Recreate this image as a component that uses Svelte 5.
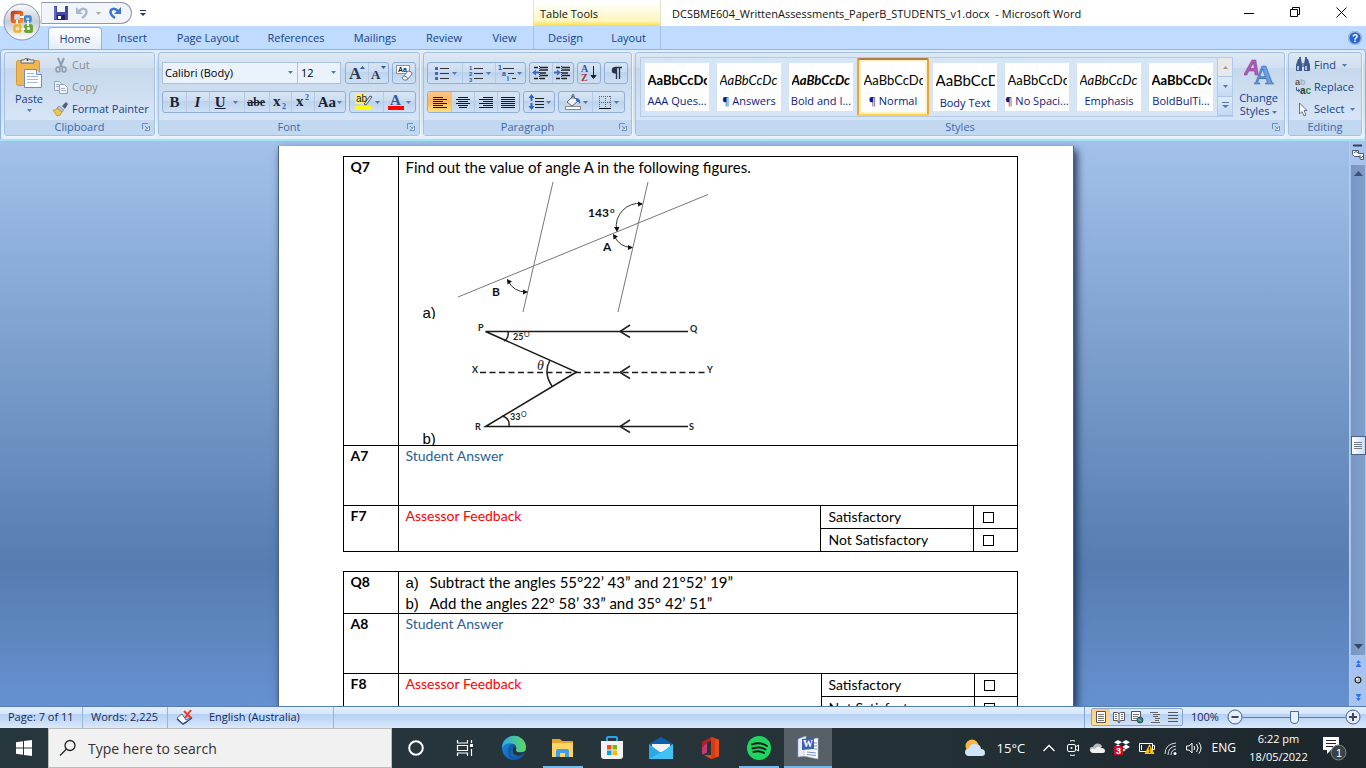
<script>
  const tabs = ['Home', 'Insert', 'Page Layout', 'References', 'Mailings', 'Review', 'View'];
  const toolTabs = ['Design', 'Layout'];

  const fontEdit = [
    { id: 'grow', label: 'Grow font', w: 22 },
    { id: 'shrink', label: 'Shrink font', w: 21 }
  ];
  const fontStyle = [
    { id: 'bold', label: 'Bold', w: 23 },
    { id: 'italic', label: 'Italic', w: 23 },
    { id: 'underline', label: 'Underline', w: 35, arrow: true },
    { id: 'strike', label: 'Strikethrough', w: 25 },
    { id: 'sub', label: 'Subscript', w: 23 },
    { id: 'sup', label: 'Superscript', w: 23 },
    { id: 'case', label: 'Change case', w: 31, arrow: true }
  ];
  const fontColor = [
    { id: 'highlight', label: 'Highlight', w: 33, arrow: true },
    { id: 'color', label: 'Font color', w: 32, arrow: true }
  ];
  const lists = [
    { id: 'bullets', label: 'Bullets', w: 34, arrow: true },
    { id: 'numbers', label: 'Numbering', w: 33, arrow: true },
    { id: 'multi', label: 'Multilevel list', w: 30, arrow: true }
  ];
  const indents = [
    { id: 'outdent', label: 'Decrease indent', w: 22 },
    { id: 'indent', label: 'Increase indent', w: 21 }
  ];
  const aligns = [
    { id: 'left', label: 'Align left', w: 23, on: true },
    { id: 'center', label: 'Center', w: 23 },
    { id: 'right', label: 'Align right', w: 23 },
    { id: 'justify', label: 'Justify', w: 22 }
  ];
  const fills = [
    { id: 'shade', label: 'Shading', w: 33, arrow: true },
    { id: 'borders', label: 'Borders', w: 32, arrow: true }
  ];

  const styles = [
    { name: 'AAA Ques...', look: 'b' },
    { name: '¶ Answers', look: 'i' },
    { name: 'Bold and I...', look: 'b i' },
    { name: '¶ Normal', look: '', on: true },
    { name: 'Body Text', look: 'body' },
    { name: '¶ No Spaci...', look: '' },
    { name: 'Emphasis', look: 'i' },
    { name: 'BoldBulTi...', look: 'b' }
  ];

  const verdicts = ['Satisfactory', 'Not Satisfactory'];
  const apps = [
    { id: 'cortana', label: 'Cortana' },
    { id: 'taskview', label: 'Task View' },
    { id: 'edge', label: 'Edge' },
    { id: 'explorer', label: 'File Explorer', open: true },
    { id: 'store', label: 'Store' },
    { id: 'mail', label: 'Mail' },
    { id: 'office', label: 'Office' },
    { id: 'spotify', label: 'Spotify', open: true },
    { id: 'word', label: 'Word', open: true, on: true }
  ];
  const views = ['print', 'read', 'web', 'outline', 'draft'];
  let zoom = $state(50);
</script>

{#snippet arrow()}
  <svg class="arrow" width="5" height="3" viewBox="0 0 5 3" aria-hidden="true"><path d="M0 0h5L2.500 3z" fill="#5579ad" /></svg>
{/snippet}

{#snippet launcher()}
  <svg class="launcher" width="8" height="8" viewBox="0 0 8 8" aria-hidden="true">
    <path d="M0.500 6V.5H6" fill="none" stroke="#6a8fc0" />
    <path d="M3 3l3 3M7.500 3v4.500H3z" fill="#fff" stroke="#6a8fc0" />
  </svg>
{/snippet}

{#snippet glyph(id)}
  {#if id === 'grow' || id === 'shrink'}
    <svg width="18" height="18" viewBox="0 0 18 18">
      <text x={id === 'grow' ? 1 : 2} y="15" class="serif b" font-size={id === 'grow' ? 17 : 13} fill="#2a3850">A</text>
      <path d={id === 'grow' ? 'M12 5h5l-2.500-3z' : 'M12 2h5l-2.500 3z'} fill="#2c5aa5" />
    </svg>
  {:else if id === 'clear'}
    <svg width="18" height="18" viewBox="0 0 18 18">
      <rect x="1.500" y="1.500" width="13" height="8" fill="#fff" stroke="#7f93b4" />
      <text x="3" y="8" font-size="7" class="sans b" fill="#223">Aa</text>
      <path d="M7 14l6-7q4 0 4 3l-5 6q-4 1-5-2z" fill="#f4f7fc" stroke="#66799c" />
      <path d="M9 12q3 0 4 3" fill="none" stroke="#66799c" />
    </svg>
  {:else if id === 'bold'}<b class="char">B</b>
  {:else if id === 'italic'}<i class="char">I</i>
  {:else if id === 'underline'}<u class="char">U</u>
  {:else if id === 'strike'}<s class="char small">abe</s>
  {:else if id === 'sub' || id === 'sup'}
    <svg width="16" height="16" viewBox="0 0 16 16">
      <text x="1" y="12" font-size="15" class="serif b" fill="#202530">x</text>
      <text x="10" y={id === 'sub' ? 15 : 6} font-size="8" class="serif b" fill="#2d60bd">2</text>
    </svg>
  {:else if id === 'case'}<span class="char">Aa</span>
  {:else if id === 'highlight'}
    <svg width="20" height="18" viewBox="0 0 20 18">
      <rect x="1" y="1" width="11" height="10" fill="#fff06a" />
      <path d="M10 11l6-8 2 1-6 8z" fill="#dfe5ee" stroke="#4e5a70" />
      <text x="2" y="9" font-size="10" class="sans" fill="#202020">ab</text>
      <rect x="1" y="13" width="16" height="4" fill="#ff0" />
    </svg>
  {:else if id === 'color'}
    <svg width="18" height="18" viewBox="0 0 18 18">
      <text x="3" y="12" font-size="15" class="serif b" fill="#33569c">A</text>
      <rect x="1" y="13" width="16" height="4" fill="#f00" />
    </svg>
  {:else if id === 'bullets'}
    <svg width="18" height="18" viewBox="0 0 18 18">
      <path d="M7 4.500h9M7 9.500h9M7 14.500h9" stroke="#333" />
      <path d="M2 3h3v3H2zM2 8h3v3H2zM2 13h3v3H2z" fill="#3f6ab3" />
    </svg>
  {:else if id === 'numbers'}
    <svg width="18" height="18" viewBox="0 0 18 18">
      <path d="M7 4.500h9M7 9.500h9M7 14.500h9" stroke="#333" />
      <g class="sans b" font-size="6" fill="#2d56a3"><text x="2" y="6">1</text><text x="2" y="12">2</text><text x="2" y="18">3</text></g>
    </svg>
  {:else if id === 'multi'}
    <svg width="18" height="18" viewBox="0 0 18 18">
      <path d="M5 4.500h11M10 9.500h6M14 14.500h4" stroke="#333" />
      <g class="sans b" font-size="7" fill="#2d56a3"><text x="0" y="6">1</text><text x="4" y="12">a</text><text x="9" y="17">i</text></g>
    </svg>
  {:else if id === 'outdent' || id === 'indent'}
    <svg width="18" height="18" viewBox="0 0 18 18">
      <path d="M2 3.500h4M8 3.500h8M8 6h8M8 9h6M8 11.500h8M2 14.500h4M8 14.500h5" stroke="#222" stroke-width="1.500" />
      <path d="M7.500 2v14" stroke="#222" stroke-dasharray="1 1" />
      <path d={id === 'outdent' ? 'M0 8.500l4-3v2h3v2H4v2z' : 'M7 8.500l-4-3v2H0v2h3v2z'} fill="#3b6cc4" />
    </svg>
  {:else if id === 'sort'}
    <svg width="18" height="18" viewBox="0 0 18 18">
      <text x="1" y="8" font-size="10" class="serif b" fill="#2d56a3">A</text>
      <text x="1" y="17" font-size="10" class="serif b" fill="#a3303a">Z</text>
      <path d="M13.500 2v12M11 11.500l2.500 3 2.500-3z" stroke="#222" fill="#222" />
    </svg>
  {:else if id === 'pilcrow'}
    <svg width="18" height="18" viewBox="0 0 18 18">
      <path d="M8 3.500h7M9.500 3v12M12.500 3v12" stroke="#26324a" stroke-width="1.300" />
      <path d="M9.500 3v6.500H8A3.200 3.200 0 018 3z" fill="#26324a" />
    </svg>
  {:else if id === 'left' || id === 'center' || id === 'right' || id === 'justify'}
    <svg width="16" height="14" viewBox="0 0 16 14">
      <path
        d={id === 'left'
          ? 'M1 2.500h10M1 4.500h14M1 6.500h10M1 8.500h14M1 10.500h10M1 12.500h14'
          : id === 'center'
            ? 'M3 2.500h10M1 4.500h14M3 6.500h10M1 8.500h14M3 10.500h10M4 12.500h8'
            : id === 'right'
              ? 'M5 2.500h10M1 4.500h14M5 6.500h10M1 8.500h14M5 10.500h10M1 12.500h14'
              : 'M1 2.500h14M1 4.500h14M1 6.500h14M1 8.500h14M1 10.500h14M1 12.500h14'}
        stroke="#15181d"
      />
    </svg>
  {:else if id === 'spacing'}
    <svg width="18" height="18" viewBox="0 0 18 18">
      <path d="M8 5.500h9M8 8.500h9M8 11.500h9M8 14.500h9" stroke="#222" />
      <path d="M4.500 1l3 4h-2v3h-2V5h-2zM4.500 17l3-4h-2v-3h-2v3h-2z" fill="#2e62c2" />
    </svg>
  {:else if id === 'shade'}
    <svg width="18" height="18" viewBox="0 0 18 18">
      <path d="M3 9l6-6 5 5-6 5z" fill="#f4f6fa" stroke="#55627a" />
      <path d="M8 6V2q2-2 2 1v3" fill="none" stroke="#55627a" />
      <path d="M12 5q5 0 4 6-2-3-4-3z" fill="#3767b5" />
      <rect x="1.500" y="13.500" width="15" height="3" fill="#fff" stroke="#888" />
    </svg>
  {:else if id === 'borders'}
    <svg width="16" height="16" viewBox="0 0 16 16">
      <path d="M2 2.500h12M2 8.500h12M2.500 2v12M8.500 2v12M13.500 2v12" stroke="#56627a" stroke-dasharray="1 1" />
      <path d="M2 14.500h12" stroke="#111" />
    </svg>
  {/if}
{/snippet}

{#snippet bar(items)}
  <div class="bar">
    {#each items as t}
      <button class:on={t.on} style="width:{t.w}px" aria-label={t.label}>
        {@render glyph(t.id)}
        {#if t.arrow}{@render arrow()}{/if}
      </button>
    {/each}
  </div>
{/snippet}

{#snippet feedback(n)}
  <tr class="rate">
    <th rowspan="2">F{n}</th>
    <td rowspan="2" class="red">Assessor Feedback</td>
    <td><label for="s{n}0">{verdicts[0]}</label></td>
    <td><input type="checkbox" id="s{n}0" /></td>
  </tr>
  <tr class="rate">
    <td><label for="s{n}1">{verdicts[1]}</label></td>
    <td><input type="checkbox" id="s{n}1" /></td>
  </tr>
{/snippet}

<div class="window">
  <header class="title">
    <div class="quick">
      <button class="orb" aria-label="Office Button">
        <svg width="38" height="38" viewBox="0 0 38 38">
          <defs>
            <linearGradient id="orb" x2="0" y2="1"><stop offset="0" stop-color="#fafbfd" /><stop offset=".5" stop-color="#c5cddb" /><stop offset="1" stop-color="#fff" /></linearGradient>
            <linearGradient id="orbr" x2="1" y2="1"><stop offset="0" stop-color="#c93a12" /><stop offset="1" stop-color="#f58a2c" /></linearGradient>
          </defs>
          <circle cx="19" cy="19" r="18" fill="url(#orb)" stroke="#8593ad" />
          <g fill="none" stroke-linejoin="round">
            <rect x="9.500" y="9.500" width="9" height="9" rx="1" stroke="url(#orbr)" stroke-width="3.500" />
            <rect x="22" y="13.500" width="5.500" height="5" rx="1" stroke="#3a86d4" stroke-width="2.500" />
            <rect x="11.500" y="22.500" width="6" height="6" rx="1" stroke="#f2b321" stroke-width="2.500" />
            <rect x="22.500" y="22.500" width="6" height="6" rx="1" stroke="#6ba531" stroke-width="3" />
          </g>
          <g fill="#f3f6fb"><path d="M13 17h2v4h-2zM17 13h4v2h-4zM24 18h2v5h-2zM18 25h4v2h-4z" /></g>
        </svg>
      </button>
      <div class="qat">
        <button aria-label="Save">
          <svg width="14" height="14" viewBox="0 0 14 14"><path d="M0 0h14v14H0z" fill="#4747a5" /><path d="M3 0h8v6H3z" fill="#f3f5fb" /><path d="M3 9h8v5H3z" fill="#24245c" /><path d="M4 10h3v3H4z" fill="#fff" /><path d="M1 1v12" stroke="#8888d8" /></svg>
        </button>
        <button aria-label="Undo">
          <svg width="14" height="14" viewBox="0 0 14 14"><path d="M4 5q4-4 7-1 2 4-4 8" fill="none" stroke="#a9b8d0" stroke-width="2.500" /><path d="M1 1v7h7z" fill="#a9b8d0" /></svg>
        </button>
        <span class="dim">{@render arrow()}</span>
        <button aria-label="Redo">
          <svg width="14" height="14" viewBox="0 0 14 14"><path d="M10 5Q6 1 3 4q-2 4 4 8" fill="none" stroke="#3c76c8" stroke-width="2.500" /><path d="M13 1v7H6z" fill="#3c76c8" /></svg>
        </button>
      </div>
      <svg class="more" width="6" height="7" viewBox="0 0 6 7" aria-hidden="true"><path d="M0 .5h6" stroke="#234" /><path d="M0 3h6L3 6z" fill="#1c3c72" /></svg>
    </div>
    <div class="context">Table Tools</div>
    <h1>DCSBME604_WrittenAssessments_PaperB_STUDENTS_v1.docx&nbsp; - Microsoft Word</h1>
    <div class="controls">
      <button aria-label="Minimize"><svg width="11" height="11" viewBox="0 0 11 11"><path d="M0 6.500h10" stroke="#000" /></svg></button>
      <button aria-label="Restore"><svg width="11" height="11" viewBox="0 0 11 11"><path d="M.5 2.500h7v7h-7zM2.500 2V.5h7v7H8" fill="none" stroke="#000" /></svg></button>
      <button aria-label="Close"><svg width="11" height="11" viewBox="0 0 11 11"><path d="M.5 .5l10 10M10.500 .5l-10 10" stroke="#000" /></svg></button>
    </div>
  </header>

  <nav class="tabs">
    {#each tabs as t, i}<button class:active={i === 0}>{t}</button>{/each}
    <div class="tooltabs">{#each toolTabs as t}<button>{t}</button>{/each}</div>
    <button class="help" aria-label="Help">
      <svg width="14" height="14" viewBox="0 0 14 14"><circle cx="7" cy="7" r="6.300" fill="#2864ce" stroke="#dfe9f8" /><circle cx="7" cy="7" r="6.800" fill="none" stroke="#5a84bd" stroke-width=".5" /><text x="4" y="10.500" font-size="10" class="sans b" fill="#fff">?</text></svg>
    </button>
  </nav>

  <div class="ribbon">
    <section class="group clip">
      <div class="body">
        <button class="big paste">
          <svg width="28" height="32" viewBox="0 0 28 32">
            <rect x="1.500" y="3.500" width="23" height="25" rx="2" fill="#efb653" stroke="#d19a3c" />
            <path d="M6 6V3h3q1-3 7 0h3v3z" fill="#ececec" stroke="#666" />
            <circle cx="12.500" cy="3" r="1" fill="#333" />
            <path d="M9.500 12.500h12l5 5v13h-17z" fill="#fff" stroke="#6d8ec4" />
            <path d="M21.500 12.500v5h5" fill="#dce8fa" stroke="#6d8ec4" />
            <path d="M12 16.500h7M12 19.500h11M12 22.500h11M12 25.500h11" stroke="#9fb7de" />
          </svg>
          <span>Paste</span>
          {@render arrow()}
        </button>
        <div class="stack">
          <button class="off">
            <svg width="16" height="16" viewBox="0 0 16 16"><path d="M5 1l4 9M11 1L7 10" stroke="#8f9cb0" stroke-width="2" /><g fill="none" stroke="#8f9cb0" stroke-width="1.500"><ellipse cx="5" cy="12.500" rx="2" ry="2.500" /><ellipse cx="11" cy="12.500" rx="2" ry="2.500" /></g></svg>Cut
          </button>
          <button class="off">
            <svg width="16" height="16" viewBox="0 0 16 16"><path d="M1.500 2.500h5l2 2v7h-7z" fill="#e9eff8" stroke="#95a5bf" /><path d="M6.500 5.500h5l3 3v6h-8z" fill="#f0f4fa" stroke="#95a5bf" /><path d="M3 5.500h3M3 7.500h3M8 9.500h4M8 11.500h5" stroke="#a7b5cb" /></svg>Copy
          </button>
          <button>
            <svg width="16" height="16" viewBox="0 0 16 16"><path d="M9 5l4-4 2 2-3 5z" fill="#4f5d85" /><path d="M6 5l5 4-2 2-5-4z" fill="#bcc7dc" stroke="#66708c" stroke-width=".6" /><path d="M4 7l5 4q-1 4-5 4L0 9q3 1 4-2z" fill="#f0c64c" stroke="#a97e22" stroke-width=".6" /></svg>Format Painter
          </button>
        </div>
      </div>
      <h2>Clipboard{@render launcher()}</h2>
    </section>

    <section class="group font">
      <div class="body rows">
        <div class="row">
          <div class="combos">
            <label class="combo wide"><select aria-label="Font"><option>Calibri (Body)</option></select>{@render arrow()}</label>
            <label class="combo"><select aria-label="Font size"><option>12</option></select>{@render arrow()}</label>
          </div>
          {@render bar(fontEdit)}
          {@render bar([{ id: 'clear', label: 'Clear formatting', w: 22 }])}
        </div>
        <div class="row">
          {@render bar(fontStyle)}
          {@render bar(fontColor)}
        </div>
      </div>
      <h2>Font{@render launcher()}</h2>
    </section>

    <section class="group para">
      <div class="body rows">
        <div class="row">
          {@render bar(lists)}
          {@render bar(indents)}
          {@render bar([{ id: 'sort', label: 'Sort', w: 22 }])}
          {@render bar([{ id: 'pilcrow', label: 'Show marks', w: 22 }])}
        </div>
        <div class="row">
          {@render bar(aligns)}
          {@render bar([{ id: 'spacing', label: 'Line spacing', w: 30, arrow: true }])}
          {@render bar(fills)}
        </div>
      </div>
      <h2>Paragraph{@render launcher()}</h2>
    </section>

    <section class="group styles">
      <div class="body">
        <div class="gallery">
          {#each styles as s}
            <button class="style" class:on={s.on}>
              <span class="tile">
                <span class="preview {s.look}">AaBbCcDc</span>
                <span class="name">{s.name}</span>
              </span>
            </button>
          {/each}
          <div class="scroller">
            <button class="dim" aria-label="Previous row"><svg width="5" height="3" viewBox="0 0 5 3"><path d="M0 3h5L2.500 0z" fill="#9a9a9a" /></svg></button>
            <button aria-label="Next row">{@render arrow()}</button>
            <button aria-label="More styles"><svg width="7" height="7" viewBox="0 0 7 7"><path d="M0 .5h7" stroke="#5579ad" /><path d="M0 3h7L3.500 6z" fill="#5579ad" /></svg></button>
          </div>
        </div>
        <button class="big change">
          <svg width="30" height="30" viewBox="0 0 30 30">
            <text x="0" y="18" font-size="22" font-style="italic" class="sans b" fill="#b058ba" stroke="#7c3b8c" stroke-width=".5">A</text>
            <text x="10" y="27" font-size="27" class="serif b" fill="#6a9ee2" stroke="#2f62ad" stroke-width=".6">A</text>
          </svg>
          <span>Change<br />Styles {@render arrow()}</span>
        </button>
      </div>
      <h2>Styles{@render launcher()}</h2>
    </section>

    <section class="group edit">
      <div class="body">
        <div class="stack">
          <button>
            <svg width="16" height="16" viewBox="0 0 16 16"><path d="M3 2h3l1 5v7H1V8zM10 2h3l2 6v6H9V7z" fill="#3d5a8f" /><path d="M7 6h2v4H7z" fill="#6e89b8" /><path d="M3 9v4M11 9v4" stroke="#d9e5f7" stroke-width="1.500" /><path d="M4 1h2M10 1h2" stroke="#22375f" stroke-width="1.500" /></svg>Find {@render arrow()}
          </button>
          <button>
            <svg width="16" height="16" viewBox="0 0 16 16"><text x="0" y="6" font-size="9" class="sans b" fill="#555">a<tspan fill="#a4b0c0">b</tspan></text><text x="5" y="15" font-size="10" class="sans b" fill="#333">a<tspan fill="#2a8a3c">c</tspan></text><path d="M1.500 8v3.500h3M3 10l2 1.500L3 13" fill="none" stroke="#3f66a5" /></svg>Replace
          </button>
          <button>
            <svg width="16" height="16" viewBox="0 0 16 16"><path d="M4.500 2v11l2.500-2.500 2 4.500 2-1-2-4.500h3z" fill="#fff" stroke="#66718a" /></svg>Select {@render arrow()}
          </button>
        </div>
      </div>
      <h2>Editing</h2>
    </section>
  </div>

  <main class="workspace">
    <div class="canvas">
      <article class="page">
        <table>
          <colgroup><col class="c1" /><col /><col class="c3" /><col class="c4" /></colgroup>
          <tbody>
            <tr>
              <th>Q7</th>
              <td colspan="3">
                <p>Find out the value of angle A in the following figures.</p>
                <ol class="figs">
                  <li class="fa">
                    <span class="mark">a)</span>
                    <svg width="275" height="140" viewBox="440 179 275 140" role="img" aria-label="Two parallel lines cut by a transversal">
                      <g stroke="#777" fill="none"><path d="M458 297L708 194.500M553 182L523 312M648 182L618 312" /></g>
                      <g stroke="#333" fill="none"><path d="M616.500 230A23 23 0 01642 203.500M614 236Q620 247 631 247.500M508 281Q514 292 526 292" /></g>
                      <g fill="#111">
                        <path d="M643 204l-5-2.500v5zM617 232l-3-5h5.500zM613 234l.5 5.500 4.500-3zM633 247.500l-5-2.500v5zM507 279l.5 5.500 4.500-3zM528 292l-5-2.500v5z" />
                        <g class="doc b" font-size="12"><text x="588" y="217">143</text><text x="603" y="251">A</text><text x="492" y="296">B</text></g>
                        <text class="doc b" font-size="8" x="610" y="213">o</text>
                      </g>
                    </svg>
                  </li>
                  <li class="fb">
                    <span class="mark">b)</span>
                    <svg width="275" height="125" viewBox="440 320 275 125" role="img" aria-label="Three parallel lines joined by two segments">
                      <path d="M688 331.500H485.500L576.500 372 485.500 426.500H688" fill="none" stroke="#181818" stroke-width="1.500" />
                      <path d="M480 372.500h225" stroke="#181818" stroke-width="1.500" stroke-dasharray="6 3.500" />
                      <path d="M630 325l-10 6.500 10 6M630 366l-10 6.500 10 6M630 420l-10 6.500 10 6" fill="none" stroke="#222" stroke-width="1.500" />
                      <path d="M508 332q1 6-4 9M550 360q-7 13 2 26M502 416q8 2 7 10" fill="none" stroke="#222" stroke-width="1.500" />
                      <g class="doc b" font-size="9" fill="#222">
                        <text x="478" y="331">P</text><text x="690" y="332">Q</text><text x="472" y="373">X</text><text x="707" y="373">Y</text><text x="475" y="430">R</text><text x="689" y="430">S</text>
                        <text x="513" y="340">25</text><text x="510" y="420">33</text>
                      </g>
                      <g class="doc" font-size="7" fill="#222"><text x="524" y="337">O</text><text x="521" y="417">O</text></g>
                      <text x="537" y="370" class="serif" font-size="14" font-style="italic" fill="#222">θ</text>
                    </svg>
                  </li>
                </ol>
              </td>
            </tr>
            <tr class="answer"><th>A7</th><td colspan="3" class="blue">Student Answer</td></tr>
            {@render feedback(7)}
          </tbody>
        </table>
        <table>
          <colgroup><col class="c1" /><col /><col class="c3" /><col class="c4" /></colgroup>
          <tbody>
            <tr class="q8">
              <th>Q8</th>
              <td colspan="3">
                <ol class="sums">
                  <li><span class="mark">a)</span>Subtract the angles 55°22’ 43” and 21°52’ 19”</li>
                  <li><span class="mark">b)</span>Add the angles 22° 58’ 33” and 35° 42’ 51”</li>
                </ol>
              </td>
            </tr>
            <tr class="answer"><th>A8</th><td colspan="3" class="blue">Student Answer</td></tr>
            {@render feedback(8)}
          </tbody>
        </table>
      </article>
    </div>
    <aside class="scroll">
      <div class="ruler">
        <svg width="14" height="18" viewBox="0 0 14 18" aria-hidden="true"><path d="M2 .5h9v2H2z" fill="#30415f" /><path d="M1.500 6.500h6v3h5v6h-3l-1-3h-5l-2-2z" fill="#fff" stroke="#4a5877" /><path d="M3 9l2-1.500L7 9M9 11v3M10 14l2-2" fill="none" stroke="#4a5877" /></svg>
      </div>
      <div class="track">
        <svg width="9" height="5" viewBox="0 0 9 5" aria-hidden="true"><path d="M0 5h9L4.500 0z" fill="#3d5075" /></svg>
        <span style="flex-grow:58"></span>
        <div class="thumb"><svg width="8" height="8" viewBox="0 0 8 8" aria-hidden="true"><path d="M0 .5h8M0 2.500h8M0 4.500h8M0 6.500h8" stroke="#6e7b90" /></svg></div>
        <span style="flex-grow:42"></span>
        <svg width="9" height="5" viewBox="0 0 9 5" aria-hidden="true"><path d="M0 0h9L4.500 5z" fill="#35466b" /></svg>
      </div>
      <div class="browse">
        <svg width="5" height="7" viewBox="0 0 5 7" aria-hidden="true"><path d="M0 3h5L2.500 0zM0 6h5L2.500 3zM0 6h5v1H0z" fill="#2f73f0" /></svg>
        <svg width="8" height="8" viewBox="0 0 8 8" aria-hidden="true"><circle cx="4" cy="4" r="3" fill="#b9bcb6" stroke="#000" /><circle cx="3" cy="3" r="1" fill="#fff" /></svg>
        <svg width="5" height="7" viewBox="0 0 5 7" aria-hidden="true"><path d="M0 4h5L2.500 7zM0 1h5L2.500 4zM0 0h5v1H0z" fill="#2f73f0" /></svg>
      </div>
    </aside>
  </main>

  <footer class="status">
    <span class="cell page-no">Page: 7 of 11</span>
    <span class="cell words">Words: 2,225</span>
    <span class="cell lang">
      <svg width="18" height="16" viewBox="0 0 18 16" aria-hidden="true"><path d="M1 9l5-4 4 6 6-3-6 6-3 1z" fill="#fff" stroke="#4c69a5" /><path d="M1 10l6 5 9-6" fill="none" stroke="#2d4f94" stroke-width="1.500" /><path d="M8 2l7 7M15 1L9 9" stroke="#ec3f26" stroke-width="2" /></svg>
      English (Australia)
    </span>
    <div class="right">
      <div class="views">
        {#each views as v}
          <button class:on={v === 'print'} aria-label="{v} view">
            <svg width="14" height="14" viewBox="0 0 14 14">
              {#if v === 'print'}
                <path d="M2.500 1.500h9v11h-9z" fill="#fff" stroke="#555" /><path d="M4 4.500h6M4 6.500h6M4 8.500h6M4 10.500h6" stroke="#777" />
              {:else if v === 'read'}
                <path d="M1.500 2.500h4l1.500 1 1.500-1h4v8h-4L7 13l-1.500-2.500h-4zM7 3v9" fill="#fff" stroke="#555" /><path d="M3 4.500h2M3 6.500h2M3 8.500h2M9 4.500h2M9 6.500h2M9 8.500h2" stroke="#777" />
              {:else if v === 'web'}
                <path d="M1.500 1.500h9v9h-9z" fill="#fff" stroke="#555" /><path d="M3 4.500h6M3 6.500h5M3 8.500h4" stroke="#777" /><circle cx="10" cy="10" r="3" fill="#3577b7" stroke="#245a46" /><path d="M8 9l3 2" stroke="#63b25a" stroke-width="1.500" />
              {:else if v === 'outline'}
                <path d="M2 2.500h8M5 4.500h7M5 6.500h5M7 8.500h5M7 10.500h4M3 12.500h9" stroke="#666" />
              {:else}
                <path d="M2 2.500h10M2 5.500h10M2 8.500h10M2 11.500h10" stroke="#555" />
              {/if}
            </svg>
          </button>
        {/each}
      </div>
      <span class="pct">100%</span>
      <button class="round" aria-label="Zoom out"><svg width="16" height="16" viewBox="0 0 16 16"><circle cx="8" cy="8" r="7" fill="#e4edf9" stroke="#3c5d91" /><path d="M4.500 8h7" stroke="#445" stroke-width="2" /></svg></button>
      <input type="range" min="0" max="100" bind:value={zoom} aria-label="Zoom" />
      <button class="round" aria-label="Zoom in"><svg width="16" height="16" viewBox="0 0 16 16"><circle cx="8" cy="8" r="7" fill="#e4edf9" stroke="#3c5d91" /><path d="M4 8h8M8 4v8" stroke="#445" stroke-width="2" /></svg></button>
    </div>
  </footer>

  <div class="taskbar">
    <button class="start" aria-label="Start"><svg width="16" height="16" viewBox="0 0 16 16"><path d="M0 2.200L7 1.200V7.500H0zM8 1l8-1v7.500H8zM0 8.500h7v6.300l-7-1zM8 8.500h8V16l-8-1z" fill="#fff" /></svg></button>
    <label class="search">
      <svg width="18" height="18" viewBox="0 0 18 18" aria-hidden="true"><circle cx="11" cy="6.500" r="5" fill="none" stroke="#222" stroke-width="1.300" /><path d="M7.500 10L1 16.500" stroke="#222" stroke-width="1.300" /></svg>
      <input type="text" placeholder="Type here to search" aria-label="Search" />
    </label>
    <div class="apps">
      {#each apps as a}
        <button class:open={a.open} class:on={a.on} aria-label={a.label}>
          <svg width="26" height="26" viewBox="0 0 26 26">
            {#if a.id === 'cortana'}
              <circle cx="13" cy="13" r="6.800" fill="none" stroke="#fff" stroke-width="2" />
            {:else if a.id === 'taskview'}
              <path d="M5.500 5v3h10V5M5.500 21v-3h10v3M5.500 10.500h10v5h-10zM19.500 5v3M19.500 14v7" fill="none" stroke="#fff" stroke-width="1.200" /><path d="M18 9h3v3h-3z" fill="#fff" />
            {:else if a.id === 'edge'}
              <defs>
                <linearGradient id="eg" x2="1"><stop offset="0" stop-color="#2ba9e8" /><stop offset="1" stop-color="#5fd860" /></linearGradient>
                <linearGradient id="eb" x2="1" y2="1"><stop offset="0" stop-color="#1c8fe0" /><stop offset="1" stop-color="#104f9c" /></linearGradient>
              </defs>
              <circle cx="13" cy="13" r="12" fill="url(#eb)" />
              <path d="M1 13A12 12 0 0125 12.500q0 5-6 5-5 0-4-3 1-5-4-6-7-1-10 4.500z" fill="url(#eg)" />
              <path d="M8 12q1-3 4-3 4 1 3 5.500-1 3 4 3 3 0 5-1l.5.500q-1 2-3 3-3 1-6-.5-4-2-3-6-3 1-2.500 5 .5 4 4.500 6-7-1-7.500-8-.2-2.500 1-4.500z" fill="#155aa5" />
              <path d="M12.500 12.500q-3 6 3 8 4 1 8-2.500l1 .5-1.500 3.500 3-1V15l-1.500 1q-2 1.500-5.500 1.500-4.500 0-4-3 .5-2-.5-3z" fill="#26353b" />
            {:else if a.id === 'explorer'}
              <path d="M2 4h8l2 2h11v16H2z" fill="#e9a528" /><path d="M2 8h21v14H2z" fill="#fdd566" /><path d="M6 22v-6q0-2 2-2h9q2 0 2 2v6h-4v-4h-5v4z" fill="#3f9de0" />
            {:else if a.id === 'store'}
              <path d="M8 8V3q0-1 1-1h8q1 0 1 1v5" fill="none" stroke="#28a5e8" stroke-width="2" /><path d="M2 6h22v15q0 3-3 3H5q-3 0-3-3z" fill="#f3f3f3" /><path d="M8 10h4.500v4.500H8z" fill="#f25022" /><path d="M13.500 10H18v4.500h-4.500z" fill="#7fba00" /><path d="M8 15.500h4.500V20H8z" fill="#00a4ef" /><path d="M13.500 15.500H18V20h-4.500z" fill="#ffb900" />
            {:else if a.id === 'mail'}
              <path d="M1 9l12-7 12 7v15H1z" fill="#0f5fae" /><path d="M4 9h18v8H4z" fill="#f2f2f2" /><path d="M1 9l12 9L25 9v15H1z" fill="#29a8ea" /><path d="M1 24l17-9.500L25 9v15z" fill="#40c2f5" />
            {:else if a.id === 'office'}
              <path d="M5 7l9-5v4l-4 1.500v10L6 19.500l-1-1z" fill="#b3202c" /><path d="M5 13l5-5v9.500L6 19.500l-1-1z" fill="#c23a75" /><path d="M14 2l8 2.500v17L14 24l-7-4h7z" fill="#ea4a16" /><path d="M14 2l4 1.200V23l-4 1z" fill="#d83b12" />
            {:else if a.id === 'spotify'}
              <circle cx="13" cy="13" r="12" fill="#1ed760" /><path d="M6 9.500q8-3 15 1.500M6.500 13.500q7.500-2.500 13 1M7.500 17q6-2 10.500 1" fill="none" stroke="#121a17" stroke-width="2" stroke-linecap="round" />
            {:else}
              <path d="M3 4l8-3v20l-8 1z" fill="#e9eef8" stroke="#8fa4cd" stroke-width=".6" /><path d="M9 6l14-3v21l-14-3z" fill="#fff" stroke="#a3b2cf" stroke-width=".6" /><path d="M7 4l12-1v11L7 15z" fill="#3c62b5" /><text x="8" y="12" font-size="10" class="serif b" fill="#fff">W</text><path d="M19 8h3M19 11h3M19 14h3M12 17l9 1M12 19.500l9 1" stroke="#6e8cc9" />
            {/if}
          </svg>
        </button>
      {/each}
    </div>
    <div class="tray">
      <svg width="22" height="18" viewBox="0 0 22 18" aria-hidden="true"><circle cx="8" cy="7" r="6.500" fill="#f8b73c" /><path d="M5 17q-4 0-4-4 0-3 4-4 2-5 7-4 5 1 5 5 4 0 4 4 0 3-3 3z" fill="#cfe4f8" /></svg>
      <span class="temp">15°C</span>
      <svg width="14" height="8" viewBox="0 0 14 8" aria-hidden="true"><path d="M1.500 7L7 1.500 12.500 7" fill="none" stroke="#fff" stroke-width="1.300" /></svg>
      <svg width="18" height="18" viewBox="-3 0 18 18" aria-hidden="true"><path d="M4 2q2-1 5 0M4 16q2 1 5 0" fill="none" stroke="#fff" /><rect x="1.500" y="5.500" width="8" height="7" rx="1.500" fill="none" stroke="#fff" /><circle cx="5.500" cy="9" r="1" fill="#fff" /><path d="M9.500 8l3-2v6l-3-2" fill="none" stroke="#fff" /></svg>
      <svg width="18" height="12" viewBox="0 0 18 12" aria-hidden="true"><path d="M4 10Q1 9 2 6q2-2 3-1 2-5 7-3 2 1 2 3z" fill="#b4b9bc" /><path d="M5 11q-4-1-2-4 2-1 4 0 3-4 6-1 4 0 4 3 0 2-3 2z" fill="#f1f1f1" /></svg>
      <svg width="18" height="18" viewBox="0 0 18 18" aria-hidden="true"><path d="M5 1l4 2.300L5 5.600 1 3.300zM13 1l4 2.300-4 2.300-4-2.300zM5 5.600l4 2.300-4 2.300-4-2.300zM13 5.600l4 2.300-4 2.300-4-2.300zM9 9l4 2-4 2-4-2z" fill="#fff" /><path d="M1 7h9v9H1z" fill="#c8102e" /><text x="3" y="15" font-size="9" class="sans b" fill="#fff">3</text></svg>
      <svg width="18" height="16" viewBox="0 0 18 16" aria-hidden="true"><path d="M1.500 3.500h13v8h-13zM15 5.500h1.500v4H15" fill="none" stroke="#fff" /><path d="M3 5h1v5H3z" fill="#fff" /><path d="M11.500 4l5 10h-10z" fill="#ffc400" /><path d="M11.500 7v3.500M11.500 11.500V13" stroke="#222" stroke-width="1.300" /></svg>
      <svg width="15" height="15" viewBox="0 0 15 15" aria-hidden="true"><path d="M2 13Q2 3 13 2M5 14Q5 6 13 5M8 14q0-5 5-6" fill="none" stroke="#ddd" /><circle cx="12" cy="12.500" r="1.500" fill="#fff" /></svg>
      <svg width="18" height="14" viewBox="0 0 18 14" aria-hidden="true"><path d="M1.500 5v4h2.500l3 3V2L4 5zM9 5q1.500 2 0 4M11.500 3q3 4 0 8M14 1.500q4 5.500 0 11" fill="none" stroke="#fff" /></svg>
      <span class="eng">ENG</span>
      <div class="clock"><span>6:22 pm</span><span>18/05/2022</span></div>
      <svg width="26" height="26" viewBox="0 0 26 26" role="img" aria-label="1 notification"><path d="M2 2h16v13H10l-4 4v-4H2z" fill="#fff" /><path d="M5 5.500h10M5 8.500h10M5 11.500h7" stroke="#223" /><circle cx="17.500" cy="17.500" r="7.500" fill="#3a4246" stroke="#888" /><text x="15" y="22" font-size="11" class="sans" fill="#fff">1</text></svg>
    </div>
  </div>
</div>

<style>
  :global(body) { margin: 0; }
  :global(*) { box-sizing: border-box; }
  .window {
    display: flex;
    flex-direction: column;
    height: 100vh;
    overflow: hidden;
    font: 11px/16px 'Open Sans', 'Noto Sans', sans-serif;
    color: #15428b;
    background: #bfdbff;
  }
  button { font: inherit; color: inherit; background: none; border: 0; padding: 0; margin: 0; }
  svg { flex: none; display: block; }
  h1, h2, p, ol { margin: 0; padding: 0; font: inherit; list-style: none; }
  .serif { font-family: 'Liberation Serif', serif; }
  .sans { font-family: 'Liberation Sans', sans-serif; }
  .doc { font-family: Lato, 'Open Sans', sans-serif; }
  .b { font-weight: 700; }

  .title { display: flex; flex: none; height: 26px; background: #fff; color: #111; }
  .quick { position: relative; flex: none; display: flex; align-items: center; gap: 8px; width: 533px; padding-left: 41px; }
  .orb { position: absolute; left: 3px; top: 3px; z-index: 2; }
  .qat {
    display: flex; align-items: center; gap: 7px; height: 22px; width: 91px; padding-left: 12px;
    background: #f1f4f9; border: 1px solid #8d98aa; border-left-color: #c3cad6; border-radius: 0 11px 11px 0;
  }
  .qat .dim { filter: grayscale(1); opacity: .6; }
  .context {
    flex: none; width: 128px; padding: 6px 0 0 6px;
    background: linear-gradient(#fff 10%, #fff6c0 80%, #fbdc3c);
    border: 1px solid #e6e0c4; border-width: 0 1px;
  }
  h1 { flex: 1; padding: 6px 0 0 11px; white-space: nowrap; overflow: hidden; }
  .controls { display: flex; padding: 0 2px 2px 0; }
  .controls button { width: 46px; display: grid; place-items: center; }

  .tabs {
    display: grid;
    grid-template-columns: 54px 60px 92px 84px 74px 64px 57px 128px 1fr;
    flex: none; height: 23px; padding-left: 48px;
  }
  .tabs button { line-height: 24px; }
  .tabs .active { line-height: 22px; background: linear-gradient(#fff, #e3ecf8); border: 1px solid #8db2e3; border-bottom: 0; border-radius: 4px 4px 0 0; margin-top: 1px; }
  .tooltabs { display: grid; grid-template-columns: 1fr 1fr; border: 1px solid #a9c1dd; border-width: 0 1px; }
  .tabs .help { justify-self: end; align-self: center; margin-right: 4px; }

  .ribbon {
    display: flex; flex: none; gap: 3px; height: 92px; padding: 2px 3px 3px;
    background: linear-gradient(#e3eefb, #cbdcf0 20%, #d2e2f4 70%, #e4f1fd);
    border: 1px solid #8db2e3; border-bottom: 2px solid #9fe4f2; border-radius: 4px;
  }
  .group {
    display: flex; flex-direction: column; flex: none; border: 1px solid #a6c0df; border-radius: 3px;
    background: linear-gradient(#dee8f5, #d1dfef 18%, #c7d8ec 19%, #dbe9f9);
    box-shadow: 1px 1px 0 #edf5fd;
  }
  .group h2 {
    position: relative; flex: none; height: 15px; line-height: 14px; text-align: center;
    background: #c1d8f0; color: #3e6aaa;
  }
  h2 :global(.launcher) { position: absolute; right: 4px; top: 3px; }
  .body { flex: 1; display: flex; min-height: 0; }
  .clip { width: 151px; }
  .font { width: 262px; }
  .para { width: 209px; }
  .styles { flex: 1; min-width: 0; }
  .edit { width: 74px; }

  .big { display: flex; flex-direction: column; align-items: center; }
  .paste { width: 48px; padding-top: 4px; gap: 2px; }
  .stack { display: flex; flex-direction: column; padding-top: 1px; }
  .stack button { flex: none; display: flex; align-items: center; gap: 3px; height: 22px; white-space: nowrap; }
  .stack .off { color: #8d8d8d; }
  .edit .stack { padding-left: 6px; }
  .edit :global(.arrow) { margin-left: 3px; }

  .rows { flex-direction: column; gap: 7px; padding: 9px 3px 0; }
  .row { display: flex; gap: 3px; }
  .combos { display: flex; margin-right: 1px; }
  .combo { position: relative; display: flex; width: 43px; height: 22px; }
  .combo.wide { width: 136px; }
  .combo select {
    flex: 1; min-width: 0; appearance: none; font: inherit; color: #000; background: #eaf2fb;
    border: 1px solid #abc1de; border-radius: 0; padding: 0 2px;
  }
  .combo + .combo select { border-left: 0; padding-left: 3px; }
  .combo :global(.arrow) { position: absolute; right: 5px; top: 9px; pointer-events: none; }
  .bar {
    display: flex; height: 22px; border: 1px solid #8fafd8; border-radius: 3px; overflow: hidden;
    background: linear-gradient(#d7e4f4, #cbdcf1 45%, #bdd2ec 46%, #cfe0f5);
  }
  .bar button { display: flex; align-items: center; justify-content: center; gap: 1px; overflow: hidden; }
  .bar button + button { box-shadow: inset 1px 0 #b4cae6; }
  .bar .on { background: linear-gradient(#fcc78c, #fdb558 50%, #ffe07c); }
  .char { font-family: 'Liberation Serif', serif; font-size: 15px; font-weight: 700; color: #1a2233; }
  .char.small { font-size: 12px; }
  .bar u { margin-right: 6px; }

  .gallery { flex: none; display: flex; margin: 4px 0 0 4px; height: 60px; border: 1px solid #b3cbe8; background: #d5e5f6; overflow: hidden; }
  .style { flex: none; width: 72px; padding: 5px 4px; }
  .style.on { padding: 2px; border: 2px solid #efa233; border-top-color: #b37a43; border-bottom-color: #ffcf4a; border-radius: 2px; background: #fff3c4; }
  .style.on .tile { height: 50px; padding-top: 8px; }
  .tile { display: flex; flex-direction: column; align-items: center; height: 48px; padding-top: 7px; background: #fff; overflow: hidden; }
  .preview { width: 59px; overflow: hidden; white-space: nowrap; text-align: left; font: 13px/20px Lato, sans-serif; color: #000; }
  .preview.b { font-weight: 700; }
  .preview.i { font-style: italic; }
  .preview.body { font-size: 15px; }
  .name { margin-top: 3px; white-space: nowrap; font-size: 11px; line-height: 16px; color: #0b1a80; }
  .scroller { display: grid; width: 15px; grid-template-rows: 1fr 1fr 1fr; border-left: 1px solid #b3cbe8; }
  .scroller button { display: grid; place-items: center; background: linear-gradient(#dfebfa, #c3d9f3); border-bottom: 1px solid #a9c4e4; }
  .scroller .dim { background: #e8e8e8; }
  .change { flex: 1; padding-top: 4px; line-height: 13px; gap: 4px; }
  .change :global(.arrow) { display: inline-block; vertical-align: middle; }

  .workspace {
    flex: 1; min-height: 0; display: flex; overflow: hidden; padding-left: 2px;
    background: linear-gradient(#a3c1ea, #7397c6 46%, #567db1 75%, #6691d0);
  }
  .canvas { flex: 1; min-width: 0; display: flex; justify-content: center; padding-top: 5px; overflow: hidden; }
  .page {
    width: 796px; padding: 10px 55px 0 64px; height: 100%; overflow: hidden; background: #fff; color: #000;
    border: 1px solid #4d6180; border-width: 0 1px; box-shadow: 3px 4px 8px #1f3557;
    font: 14px/20px Lato, 'Open Sans', sans-serif;
  }
  table { width: 100%; table-layout: fixed; border-collapse: collapse; margin-bottom: 19px; }
  .c1 { width: 55px; }
  .c3 { width: 153px; }
  .c4 { width: 43px; }
  th, td { border: 1px solid #000; vertical-align: top; text-align: left; padding: 0 7px; }
  th { font-weight: 700; }
  p, .sums { font-size: 15px; }
  .figs li { display: flex; align-items: flex-end; padding-left: 17px; gap: 5px; }
  .figs svg { overflow: hidden; }
  .fa { height: 142px; }
  .fb { height: 126px; }
  .mark { font: 15px/21px 'Liberation Sans', sans-serif; }
  .figs .mark { width: 12px; height: 17px; overflow: hidden; }
  .sums { line-height: 21px; height: 41px; }
  .sums li { display: flex; }
  .sums .mark { width: 24px; }
  .q8 { height: 42px; }
  .answer { height: 60px; }
  .rate { height: 22px; }
  .rate td { line-height: 22px; }
  .rate .red, .rate th { line-height: 20px; }
  .rate input { appearance: none; display: block; width: 11px; height: 11px; margin: 6px 0 0 2px; border: 1px solid #000; background: #fff; }
  .blue { color: #2e6096; }
  .red { color: #f00; }

  .scroll { flex: none; display: flex; flex-direction: column; width: 17px; border-left: 1px solid #b3cdf0; background: #a8c4ee; }
  .ruler { height: 24px; padding: 3px 0 0 1px; }
  .track { flex: 1; display: flex; flex-direction: column; align-items: center; padding: 6px 0; margin: 0 1px; background: linear-gradient(90deg, #7896c3, #809fcb); }
  .thumb { display: grid; place-items: center; width: 15px; height: 19px; background: linear-gradient(90deg, #fff, #cfdcee); border: 1px solid #4b618c; }
  .browse { flex: none; height: 51px; display: flex; flex-direction: column; align-items: center; justify-content: space-around; }

  .status {
    flex: none; display: flex; height: 22px; line-height: 18px; color: #15295c; border-top: 1px solid #567db1;
    background: linear-gradient(#e4effd 0, #d6e5fa 33%, #b5d0f3 34%, #dae8fb);
  }
  .cell { display: flex; align-items: center; padding: 0 0 2px 8px; border-right: 1px solid #94b4dc; white-space: nowrap; }
  .page-no { width: 83px; }
  .words { width: 85px; }
  .lang { width: 166px; gap: 15px; }
  .right { display: flex; align-items: center; margin-left: auto; padding: 0 5px 1px 6px; border-left: 1px solid #84a5d0; }
  .views { display: flex; height: 18px; border: 1px solid #84a5d0; border-radius: 2px; margin-right: 8px; }
  .views button { width: 18px; display: grid; place-items: center; }
  .views .on { background: linear-gradient(#ffc98a, #ffe18c); }
  .pct { width: 36px; }
  input[type='range'] { appearance: none; width: 102px; height: 16px; margin: 0; background: linear-gradient(#5779ac, #5779ac) center / 100% 1px no-repeat; }
  input[type='range']::-webkit-slider-thumb { appearance: none; width: 9px; height: 13px; background: #e8f0fb; border: 1px solid #4a6ba0; border-radius: 1px 1px 5px 5px; }

  .taskbar { flex: none; display: flex; height: 40px; background: linear-gradient(90deg, #26363d, #27353b 50%, #1c272c); color: #fff; }
  .start { width: 48px; display: grid; place-items: center; }
  .search { display: flex; align-items: center; width: 344px; background: #f1f1f1; border: 1px solid #bbb; padding-left: 10px; }
  .search input { flex: 1; min-width: 0; border: 0; outline: 0; background: none; padding: 0 0 0 11px; font: 14px 'Open Sans', sans-serif; color: #333; }
  .search input::placeholder { color: #333; opacity: 1; }
  .apps { display: flex; gap: 1px; }
  .apps button { width: 48px; display: grid; place-items: center; }
  .apps .open { background: linear-gradient(#76b9ed, #76b9ed) center bottom / 40px 2px no-repeat; }
  .apps .on { background: linear-gradient(#76b9ed, #76b9ed) center bottom / 48px 2px no-repeat, #566066; }
  .tray { display: flex; align-items: center; gap: 7px; margin-left: auto; padding-right: 19px; font-size: 12px; }
  .temp { font-size: 13px; width: 42px; padding-left: 4px; }
  .eng { margin-left: 2px; }
  .clock { display: flex; flex-direction: column; align-items: center; line-height: 18px; font-size: 11px; width: 71px; }
</style>
